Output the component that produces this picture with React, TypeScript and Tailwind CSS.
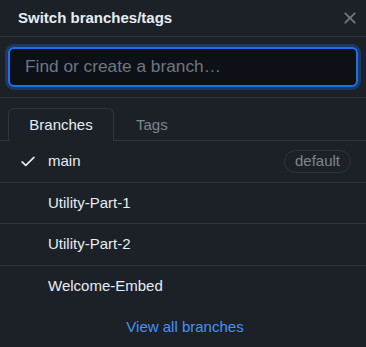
import React from 'react';

const branches = ['main', 'Utility-Part-1', 'Utility-Part-2', 'Welcome-Embed'];

const App: React.FC = () => {
  return (
    <div
      className="w-[366px] h-[347px] bg-[#1c2128] text-[#e6edf3] overflow-hidden flex flex-col"
      style={{ fontFamily: '"Liberation Sans", Arial, sans-serif' }}
    >
      {/* Header */}
      <div className="h-[37px] shrink-0 flex items-center justify-between pl-[18px] pr-[6px] border-b border-[#30363d]">
        <span className="text-[15px] font-bold text-[#e6edf3]">Switch branches/tags</span>
        <svg width="20" height="20" viewBox="0 0 16 16" className="text-[#6e7681]">
          <path
            fill="currentColor"
            d="M3.72 3.72a.75.75 0 0 1 1.06 0L8 6.94l3.22-3.22a.749.749 0 0 1 1.275.326.749.749 0 0 1-.215.734L9.06 8l3.22 3.22a.749.749 0 0 1-.326 1.275.749.749 0 0 1-.734-.215L8 9.06l-3.22 3.22a.751.751 0 0 1-1.042-.018.751.751 0 0 1-.018-1.042L6.94 8 3.72 4.78a.75.75 0 0 1 0-1.06Z"
          />
        </svg>
      </div>

      {/* Filter */}
      <div className="h-[61px] shrink-0 px-[8px] flex items-center border-b border-[#30363d]">
        <div className="w-full h-[40px] rounded-[6px] bg-[#0d1117] border-2 border-[#1f6feb] shadow-[0_0_0_3px_rgba(31,111,235,0.3)] flex items-center pl-[15px]">
          <span className="text-[17.3px] text-[#6e7681]">Find or create a branch…</span>
        </div>
      </div>

      {/* Tabs */}
      <div className="h-[43px] shrink-0 flex items-end px-[8px] border-b border-[#30363d]">
        <div className="w-[106px] h-[33px] -mb-px rounded-t-[6px] border border-b-0 border-[#30363d] bg-[#1c2128] flex items-center justify-center text-[15px] text-[#e6edf3]">
          Branches
        </div>
        <div className="h-[33px] -mb-px pt-[2px] flex items-center px-[22px] text-[15px] text-[#7d8590]">Tags</div>
      </div>

      {/* Branch list */}
      <div className="flex flex-col">
        {branches.map((b, i) => (
          <div
            key={b}
            className={`h-[41.5px] flex items-center pl-[19px] pr-[15px] ${i < branches.length - 1 ? 'border-b border-[#30363d]' : ''}`}
          >
            <div className="w-[29px] shrink-0">
              {i === 0 && (
                <svg width="18" height="18" viewBox="0 0 16 16" className="text-[#e6edf3]">
                  <path
                    fill="currentColor"
                    d="M13.78 4.22a.75.75 0 0 1 0 1.06l-7.25 7.25a.75.75 0 0 1-1.06 0L2.22 9.28a.751.751 0 0 1 .018-1.042.751.751 0 0 1 1.042-.018L6 10.94l6.72-6.72a.75.75 0 0 1 1.06 0Z"
                  />
                </svg>
              )}
            </div>
            <span className="text-[15px] text-[#e6edf3] flex-1">{b}</span>
            {i === 0 && (
              <span className="h-[23px] px-[10px] rounded-full border border-[#30363d] text-[15px] text-[#7d8590] flex items-center">
                default
              </span>
            )}
          </div>
        ))}
      </div>

      <div className="flex-1 flex items-center justify-center pl-[4px]">
        <span className="text-[15px] text-[#4493f8]">View all branches</span>
      </div>
    </div>
  );
};

export default App;
